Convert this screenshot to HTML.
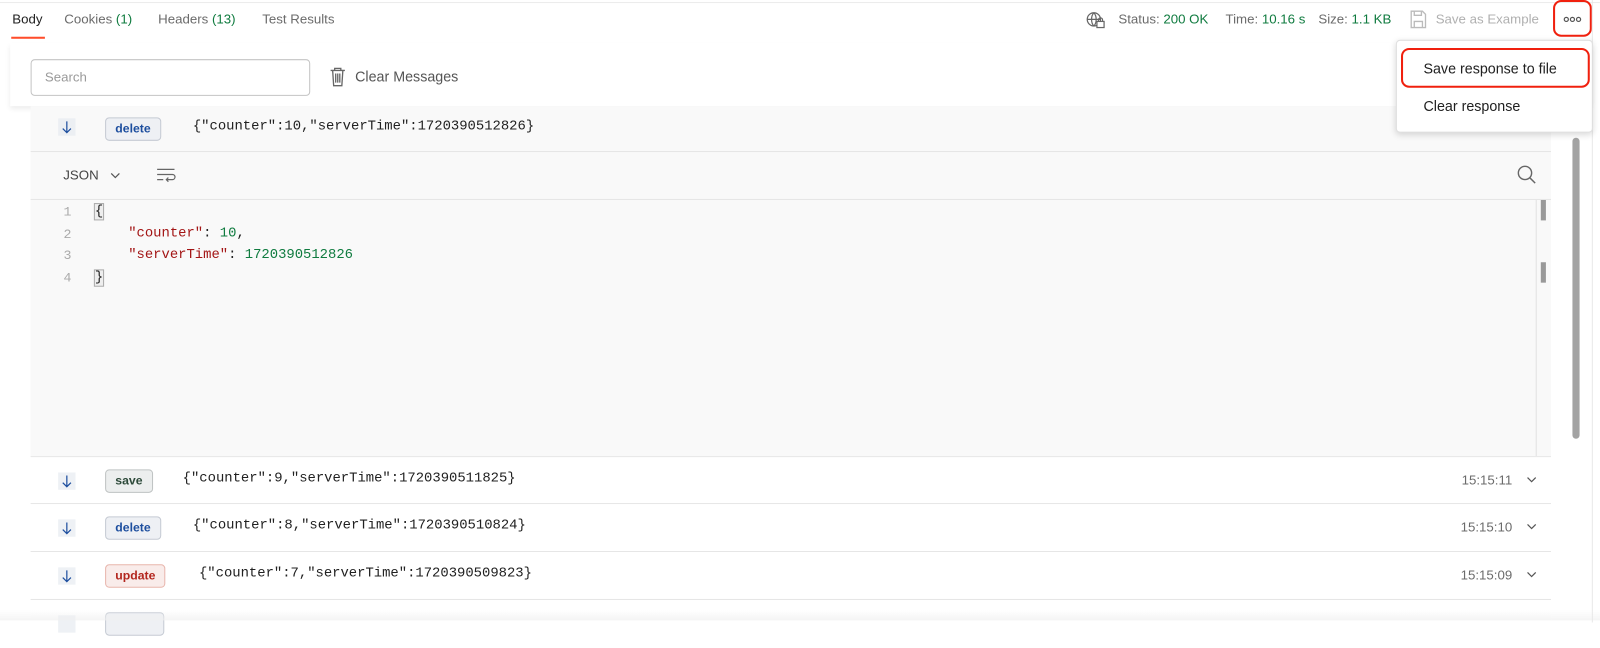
<!DOCTYPE html>
<html><head><meta charset="utf-8"><style>
*{box-sizing:border-box;margin:0;padding:0}
html,body{width:1600px;height:618px;overflow:hidden;background:#fff}
#w{position:absolute;left:0;top:0;width:1568px;height:606px;transform:scale(1.0204);transform-origin:0 0;font-family:"Liberation Sans",sans-serif;font-size:13px;color:#212121}
.a{position:absolute}
.mono{font-family:"Liberation Mono",monospace}
.tab{position:absolute;top:11px;font-size:13px;color:#6b6b6b}
.g{color:#0f7b3f}
.row{position:absolute;left:30px;width:1490px;height:47px;border-bottom:1px solid #e6e6e6;background:#fff}
.arrow{position:absolute;left:27px;top:15px;width:17px;height:17px;background:#eef1f5}
.badge{position:absolute;left:73px;top:12px;height:23px;border-radius:4px;font-size:12px;font-weight:bold;line-height:21px;padding:0 9px}
.del{background:#eef0f4;border:1px solid #c5cad3;color:#1d4e9e}
.sav{background:#eceeee;border:1px solid #bfc3c3;color:#2d4a3a}
.upd{background:#f9ecea;border:1px solid #e8b5ac;color:#b3261e}
.msg{position:absolute;top:14px;font-size:13.6px;color:#212121}
.time{position:absolute;right:38px;top:15px;color:#6b6b6b;font-size:13px}
.chev{position:absolute;right:14px;top:19px}
</style></head><body><div id="w">
<svg width="0" height="0" style="position:absolute"><defs>
<symbol id="ar" viewBox="0 0 17 17"><path d="M8.5 3v11M4.5 10l4 4 4-4" fill="none" stroke="#1d4e9e" stroke-width="1.2"/></symbol>
<symbol id="ch" viewBox="0 0 10 6"><path d="M1 1l4 4 4-4" fill="none" stroke="#555" stroke-width="1.2"/></symbol>
</defs></svg>
<div class="a" style="left:0;top:0;width:1568px;height:3px;border-bottom:1px solid #ececec"></div>
<div class="tab" style="left:12px;color:#212121">Body</div>
<div class="a" style="left:11px;top:36px;width:33px;height:2px;background:#ff4d2b"></div>
<div class="tab" style="left:63px">Cookies <span class="g">(1)</span></div>
<div class="tab" style="left:155px">Headers <span class="g">(13)</span></div>
<div class="tab" style="left:257px">Test Results</div>

<svg class="a" style="left:1064px;top:11px" width="20" height="18" viewBox="0 0 20 18" fill="none" stroke="#666" stroke-width="1.2"><circle cx="8" cy="8" r="6.5"/><path d="M1.5 8h13M8 1.5c-3 3-3 10 0 13M8 1.5c3 3 3 10 0 13"/><rect x="11" y="10" width="7" height="6" fill="#fff"/><path d="M12.5 10V8.5a2 2 0 014 0V10"/></svg>
<div class="tab" style="left:1096px">Status: <span class="g">200 OK</span></div>
<div class="tab" style="left:1201px">Time: <span class="g">10.16 s</span></div>
<div class="tab" style="left:1292px">Size: <span class="g">1.1 KB</span></div>
<svg class="a" style="left:1382px;top:10px" width="16" height="18" viewBox="0 0 16 18" fill="none" stroke="#bbb" stroke-width="1.3"><path d="M1 1h11l3 3v13H1z"/><path d="M4 1v4h7V1M4 17v-6h8v6"/></svg>
<div class="tab" style="left:1407px;color:#b0b0b0">Save as Example</div>
<div class="a" style="left:1522px;top:0;width:38px;height:36px;border:2px solid #f0200e;border-radius:8px"></div>
<svg class="a" style="left:1532px;top:16px" width="18" height="6" viewBox="0 0 18 6" fill="none" stroke="#555" stroke-width="1.2"><circle cx="3" cy="3" r="2"/><circle cx="9" cy="3" r="2"/><circle cx="15" cy="3" r="2"/></svg>

<div class="a" style="left:10px;top:42px;width:1550px;height:62px;background:#fff;box-shadow:0 3px 5px rgba(0,0,0,.08)"></div>
<div class="a" style="left:30px;top:58px;width:274px;height:36px;border:1px solid #c4c4c4;border-radius:4px;padding:9px 13px;color:#9a9a9a">Search</div>
<svg class="a" style="left:323px;top:66px" width="16" height="19" viewBox="0 0 16 19" fill="none" stroke="#666" stroke-width="1.3"><path d="M1 3h14M5 3V1h6v2M3 3l1 15h8l1-15M6 6v9M8 6v9M10 6v9"/></svg>
<div class="a" style="left:348px;top:67px;color:#555;font-size:14px">Clear Messages</div>

<div class="a" style="left:30px;top:104px;width:1490px;height:343px;background:#f9f9f9"></div>
<div class="a" style="left:30px;top:148px;width:1490px;height:1px;background:#e6e6e6"></div>
<div class="a" style="left:30px;top:195px;width:1490px;height:1px;background:#e6e6e6"></div>
<svg class="a" style="left:57px;top:116px;background:#eceff3" width="17" height="17"><use href="#ar"/></svg>
<div class="badge del" style="left:103px;top:115px">delete</div>
<div class="msg mono" style="left:189px;top:117px">{"counter":10,"serverTime":1720390512826}</div>
<div class="a" style="left:62px;top:164px;color:#444">JSON</div>
<svg class="a" style="left:108px;top:169px" width="10" height="6"><use href="#ch"/></svg>
<svg class="a" style="left:153px;top:164px" width="20" height="16" viewBox="0 0 20 16" fill="none" stroke="#666" stroke-width="1.2"><path d="M1 2h17M1 7h15a2.5 2.5 0 010 5h-6M12 10l-2 2 2 2M1 12h6"/></svg>
<svg class="a" style="left:1486px;top:161px" width="20" height="20" viewBox="0 0 20 20" fill="none" stroke="#666" stroke-width="1.4"><circle cx="8.5" cy="8.5" r="6.5"/><path d="M13.5 13.5l5 5"/></svg>
<div class="a mono" style="left:56px;top:197px;color:#aaa;line-height:21.5px;font-size:13px;text-align:right;width:14px">1<br>2<br>3<br>4</div>
<div class="a mono" style="left:93px;top:197px;line-height:21.5px;font-size:13.6px;white-space:pre"><span style="outline:1px solid #aaa;background:#eee">{</span>
    <span style="color:#a31515">"counter"</span>: <span class="g">10</span>,
    <span style="color:#a31515">"serverTime"</span>: <span class="g">1720390512826</span>
<span style="outline:1px solid #aaa;background:#eee">}</span></div>
<div class="a" style="left:1505px;top:196px;width:1px;height:251px;background:#e2e2e2"></div>
<div class="a" style="left:1510px;top:196px;width:5px;height:20px;background:#999"></div>
<div class="a" style="left:1510px;top:257px;width:5px;height:20px;background:#999"></div>

<div class="row" style="top:447px;border-top:1px solid #e6e6e6"><svg class="arrow" width="17" height="17"><use href="#ar"/></svg><div class="badge sav">save</div><div class="msg mono" style="left:149px">{"counter":9,"serverTime":1720390511825}</div><div class="time">15:15:11</div><svg class="chev" width="10" height="6"><use href="#ch"/></svg></div>
<div class="row" style="top:494px"><svg class="arrow" width="17" height="17"><use href="#ar"/></svg><div class="badge del">delete</div><div class="msg mono" style="left:159px">{"counter":8,"serverTime":1720390510824}</div><div class="time">15:15:10</div><svg class="chev" width="10" height="6"><use href="#ch"/></svg></div>
<div class="row" style="top:541px"><svg class="arrow" width="17" height="17"><use href="#ar"/></svg><div class="badge upd">update</div><div class="msg mono" style="left:165px">{"counter":7,"serverTime":1720390509823}</div><div class="time">15:15:09</div><svg class="chev" width="10" height="6"><use href="#ch"/></svg></div>
<div class="row" style="top:588px;border-bottom:none"><div class="arrow"></div><div class="badge del" style="width:58px"></div></div>
<div class="a" style="left:0;top:598px;width:1568px;height:10px;background:linear-gradient(rgba(255,255,255,0),rgba(240,240,240,.7))"></div>

<div class="a" style="left:1541px;top:135px;width:7px;height:295px;border-radius:4px;background:#a3a3a3"></div>
<div class="a" style="left:1560px;top:0;width:1px;height:610px;background:#e8e8e8"></div>

<div class="a" style="left:1368px;top:39px;width:193px;height:91px;background:#fff;border:1px solid #e0e0e0;border-radius:4px;box-shadow:0 2px 6px rgba(0,0,0,.15)"></div>
<div class="a" style="left:1373px;top:47px;width:185px;height:39px;border:2px solid #f0200e;border-radius:8px"></div>
<div class="a" style="left:1395px;top:59px;font-size:14px;color:#212121">Save response to file</div>
<div class="a" style="left:1395px;top:96px;font-size:14px;color:#212121">Clear response</div>
</div></body></html>
